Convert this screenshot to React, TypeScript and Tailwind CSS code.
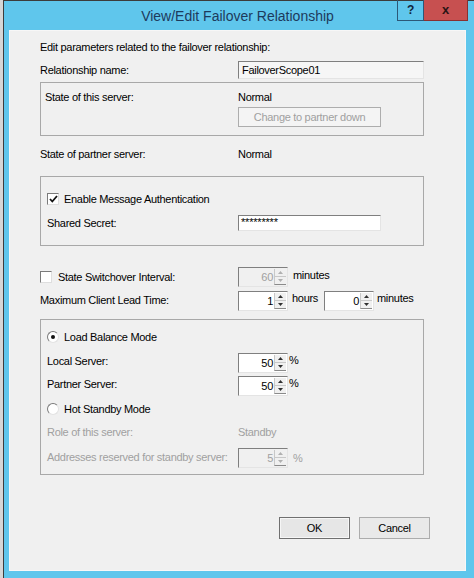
import React from "react";

const font = "font-['Liberation_Sans',Arial,sans-serif]";

function Arrow({ up, disabled }: { up?: boolean; disabled?: boolean }) {
  return (
    <svg width="5" height="3" viewBox="0 0 5 3">
      <path d={up ? "M0 3 L2.5 0 L5 3 Z" : "M0 0 L2.5 3 L5 0 Z"} fill={disabled ? "#b0b0b0" : "#303030"} />
    </svg>
  );
}

function Spin({ value, disabled }: { value: string; disabled?: boolean }) {
  return (
    <div
      className={
        disabled
          ? "flex w-[50px] h-[20px] border border-t-[#7f7f7f] border-l-[#7f7f7f] border-r-[#e4e4e4] border-b-[#e4e4e4] bg-[#f0f0f0] text-[#a0a0a0]"
          : "flex w-[50px] h-[20px] border border-t-[#7f7f7f] border-l-[#7f7f7f] border-r-[#e4e4e4] border-b-[#e4e4e4] bg-white text-black"
      }
    >
      <div className="flex-1 text-right pr-[1px] leading-[18px]">{value}</div>
      <div className="flex flex-col w-[13px] py-[1px] pr-[1px]">
        <div className="flex-1 flex items-center justify-center bg-[#f0f0f0] border-l border-b border-[#c8c8c8]">
          <Arrow up disabled={disabled} />
        </div>
        <div className="flex-1 flex items-center justify-center bg-[#f0f0f0] border-l border-[#c8c8c8] border-b border-b-[#8a8a8a]">
          <Arrow disabled={disabled} />
        </div>
      </div>
    </div>
  );
}

function Check({ checked }: { checked?: boolean }) {
  return (
    <div className="w-[12px] h-[12px] border border-t-[#7a7a7a] border-l-[#7a7a7a] border-r-[#dedede] border-b-[#dedede] bg-white flex items-center justify-center">
      {checked && (
        <svg width="9" height="8" viewBox="0 0 9 8">
          <path d="M1 4 L3.3 6.5 L8 1" stroke="#111" strokeWidth="1.8" fill="none" />
        </svg>
      )}
    </div>
  );
}

function Radio({ checked }: { checked?: boolean }) {
  return (
    <div className="w-[12px] h-[12px] rounded-full border border-t-[#7a7a7a] border-l-[#7a7a7a] border-r-[#e2e2e2] border-b-[#e2e2e2] bg-white flex items-center justify-center">
      {checked && <div className="w-[4px] h-[4px] rounded-full bg-[#111]" />}
    </div>
  );
}

function Row({ label, children, w = "w-[198px]", gray, h = "h-[16px]" }: { label: React.ReactNode; children?: React.ReactNode; w?: string; gray?: boolean; h?: string }) {
  return (
    <div className={`flex items-center ${h} ${gray ? "text-[#a0a0a0]" : "text-black"}`}>
      <div className={w}>{label}</div>
      {children}
    </div>
  );
}

export default function App() {
  return (
    <div className={`flex w-[474px] h-[578px] bg-[#d6d6d6] ${font} text-[11px] tracking-[-0.3px] text-black overflow-hidden`}>
      <div className="w-[3px]" />
      <div className="flex-1 flex flex-col bg-[#5fc6ec] border-l border-t border-[#3c3c3c]">
        {/* title bar */}
        <div className="flex h-[29px] shrink-0">
          <div className="w-[74px]" />
          <div className="flex-1 text-center text-[14px] tracking-normal text-[#1d3a5c] leading-[29px] pt-[1px]">
            View/Edit Failover Relationship
          </div>
          <div className="flex h-[21px] -mt-px">
            <div className="w-[27px] border border-t-0 border-[#2c5878] flex items-center justify-center text-[12px] font-bold text-[#10243a]">?</div>
            <div className="w-[44px] bg-[#c75050] border border-t-0 border-l-0 border-[#8a3030] flex items-center justify-center text-[13px] font-bold text-[#2a1414]">x</div>
          </div>
          <div className="w-[6px]" />
        </div>

        {/* body */}
        <div className="flex-1 ml-[5px] mr-[8px] mb-[7px] bg-[#f0f0f0] border border-[#f7f7f7] flex flex-col pl-[30px] pr-[41px]">
          <div className="mt-[8px] h-[16px] leading-[16px]">Edit parameters related to the failover relationship:</div>

          <Row label="Relationship name:" h="h-[18px] mt-[6px]">
            <div className="w-[186px] h-[18px] border border-t-[#7f7f7f] border-l-[#7f7f7f] border-r-[#e4e4e4] border-b-[#e4e4e4] bg-[#f6f6f6] pl-[3px] leading-[16px]">
              FailoverScope01
            </div>
          </Row>

          <div className="mt-[3px] h-[54px] border border-[#a8a8a8] pl-[4px] flex flex-col">
            <Row label="State of this server:" w="w-[193px]" h="h-[16px] mt-[6px]">
              <span>Normal</span>
            </Row>
            <div className="flex mt-[2px]">
              <div className="w-[193px]" />
              <div className="w-[143px] h-[20px] border border-[#adadad] bg-[#f4f4f4] text-[#a0a0a0] text-center leading-[18px]">
                Change to partner down
              </div>
            </div>
          </div>

          <Row label="State of partner server:" h="h-[16px] mt-[10px]">
            <span>Normal</span>
          </Row>

          <div className="mt-[14px] h-[70px] border border-[#a8a8a8] pl-[6px] flex flex-col">
            <div className="flex items-center h-[16px] mt-[14px] gap-[5px]">
              <Check checked />
              <span>Enable Message Authentication</span>
            </div>
            <Row label="Shared Secret:" w="w-[191px]" h="h-[16px] mt-[8px]">
              <div className="w-[143px] h-[16px] border border-t-[#7f7f7f] border-l-[#7f7f7f] border-r-[#e4e4e4] border-b-[#e4e4e4] bg-white pl-[2px] pt-[1px] leading-[11px] text-[11px] tracking-[-0.2px]">
                *********
              </div>
            </Row>
          </div>

          <div className="flex items-center h-[20px] mt-[21px]">
            <div className="w-[198px] flex items-center gap-[6px]">
              <Check />
              <span>State Switchover Interval:</span>
            </div>
            <Spin value="60" disabled />
            <span className="ml-[5px] -mt-[4px]">minutes</span>
          </div>

          <div className="flex items-center h-[21px] mt-[3px]">
            <div className="w-[198px]">Maximum Client Lead Time:</div>
            <Spin value="1" />
            <span className="ml-[4px] -mt-[4px] w-[32px]">hours</span>
            <Spin value="0" />
            <span className="ml-[3px] -mt-[4px]">minutes</span>
          </div>

          <div className="mt-[8px] h-[156px] border border-[#a8a8a8] pl-[6px] flex flex-col">
            <div className="flex items-center h-[16px] mt-[9px] gap-[5px]">
              <Radio checked />
              <span>Load Balance Mode</span>
            </div>
            <div className="flex items-center h-[20px] mt-[8px]">
              <div className="w-[191px] -mt-[4px]">Local Server:</div>
              <Spin value="50" />
              <span className="ml-[1px] -mt-[6px]">%</span>
            </div>
            <div className="flex items-center h-[20px] mt-[3px]">
              <div className="w-[191px] -mt-[4px]">Partner Server:</div>
              <Spin value="50" />
              <span className="ml-[1px] -mt-[6px]">%</span>
            </div>
            <div className="flex items-center h-[16px] mt-[5px] gap-[5px]">
              <Radio />
              <span>Hot Standby Mode</span>
            </div>
            <Row label="Role of this server:" w="w-[191px]" h="h-[16px] mt-[7px]" gray>
              <span>Standby</span>
            </Row>
            <div className="flex items-center h-[20px] mt-[8px] text-[#a0a0a0]">
              <div className="w-[191px] -mt-[2px]">Addresses reserved for standby server:</div>
              <Spin value="5" disabled />
              <span className="ml-[5px]">%</span>
            </div>
          </div>

          <div className="flex justify-end gap-[9px] mt-[42px] -mr-[6px]">
            <div className="w-[71px] h-[22px] border border-[#707070] bg-[#e6e6e6] text-center leading-[20px] shadow-[inset_0_0_0_1px_#f6f6f6]">OK</div>
            <div className="w-[71px] h-[22px] border border-[#acacac] bg-[#e9e9e9] text-center leading-[20px]">Cancel</div>
          </div>
        </div>
      </div>
    </div>
  );
}
